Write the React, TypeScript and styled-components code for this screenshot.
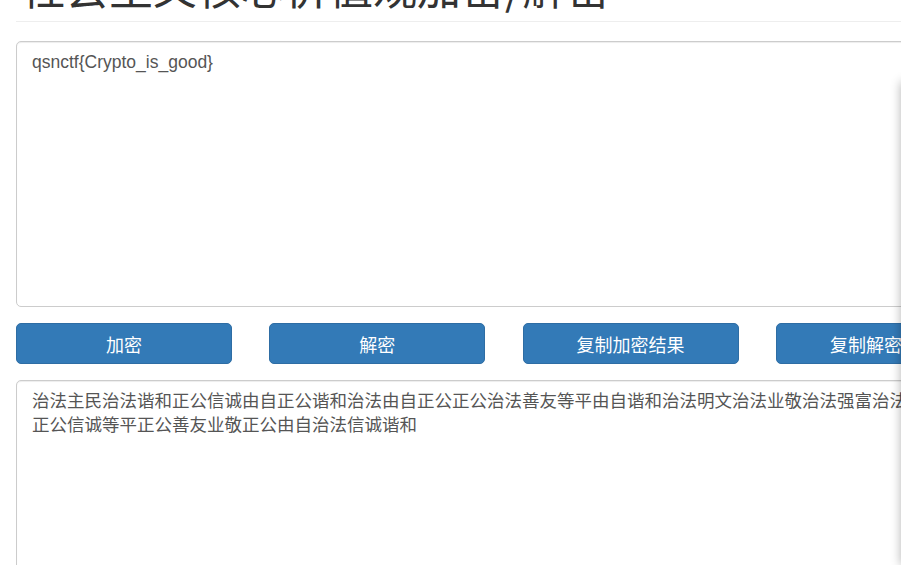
import React from "react";
import styled, { createGlobalStyle } from "styled-components";

const plain = "qsnctf{Crypto_is_good}";
const cipher =
  "治法主民治法谐和正公信诚由自正公谐和治法由自正公正公治法善友等平由自谐和治法明文治法业敬治法强富治法正公信诚等平正公善友业敬正公由自治法信诚谐和";

const actions = ["加密", "解密", "复制加密结果", "复制解密结果"];

const GlobalStyle = createGlobalStyle`
  html, body {
    margin: 0;
    padding: 0;
    background: #fff;
    overflow: hidden;
  }
  body {
    font-family: "Liberation Sans", "Noto Sans CJK SC", sans-serif;
    color: #333;
  }
`;

export default function App() {
  return (
    <>
      <GlobalStyle />
      <Page>
        <Header>
          <Title>社会主义核心价值观加密/解密</Title>
        </Header>
        <Field readOnly value={plain} />
        <Actions>
          {actions.map((a) => (
            <Button key={a}>{a}</Button>
          ))}
        </Actions>
        <Field readOnly value={cipher} />
      </Page>
      <SidePanel />
    </>
  );
}

const Page = styled.div`
  width: 1000px;
  padding: 0 16px;
  display: flex;
  flex-direction: column;
  gap: 16px;
`;

const Header = styled.div`
  margin-top: -38px;
  padding-bottom: 11px;
  border-bottom: 1px solid #eee;
  margin-bottom: 3px;
`;

const Title = styled.h1`
  margin: 0;
  font-family: "Noto Sans CJK SC", sans-serif;
  font-size: 44px;
  font-weight: 400;
  line-height: 1.1;
  color: #333;
  padding-left: 5px;
`;

const Field = styled.textarea`
  box-sizing: border-box;
  width: 922px;
  height: 266px;
  margin: 0;
  padding: 8px 15px;
  border: 1px solid #ccc;
  border-radius: 5px;
  box-shadow: inset 0 1px 1px rgba(0, 0, 0, 0.075);
  font-family: "Liberation Sans", "Noto Sans CJK SC", sans-serif;
  font-size: 17.5px;
  line-height: 24px;
  color: #555;
  resize: none;
  outline: none;
  overflow: hidden;
`;

const Actions = styled.div`
  display: flex;
  gap: 37.3px;
`;

const Button = styled.button`
  flex: 0 0 216px;
  height: 41px;
  background: #337ab7;
  border: 1px solid #2e6da4;
  border-radius: 5px;
  color: #fff;
  font-family: "Liberation Sans", "Noto Sans CJK SC", sans-serif;
  font-size: 18px;
  white-space: nowrap;
  padding: 0;
`;

const SidePanel = styled.div`
  position: fixed;
  left: 901px;
  top: 82px;
  width: 200px;
  bottom: 0;
  background: #fff;
  box-shadow: 0 0 10px rgba(0, 0, 0, 0.3);
`;
